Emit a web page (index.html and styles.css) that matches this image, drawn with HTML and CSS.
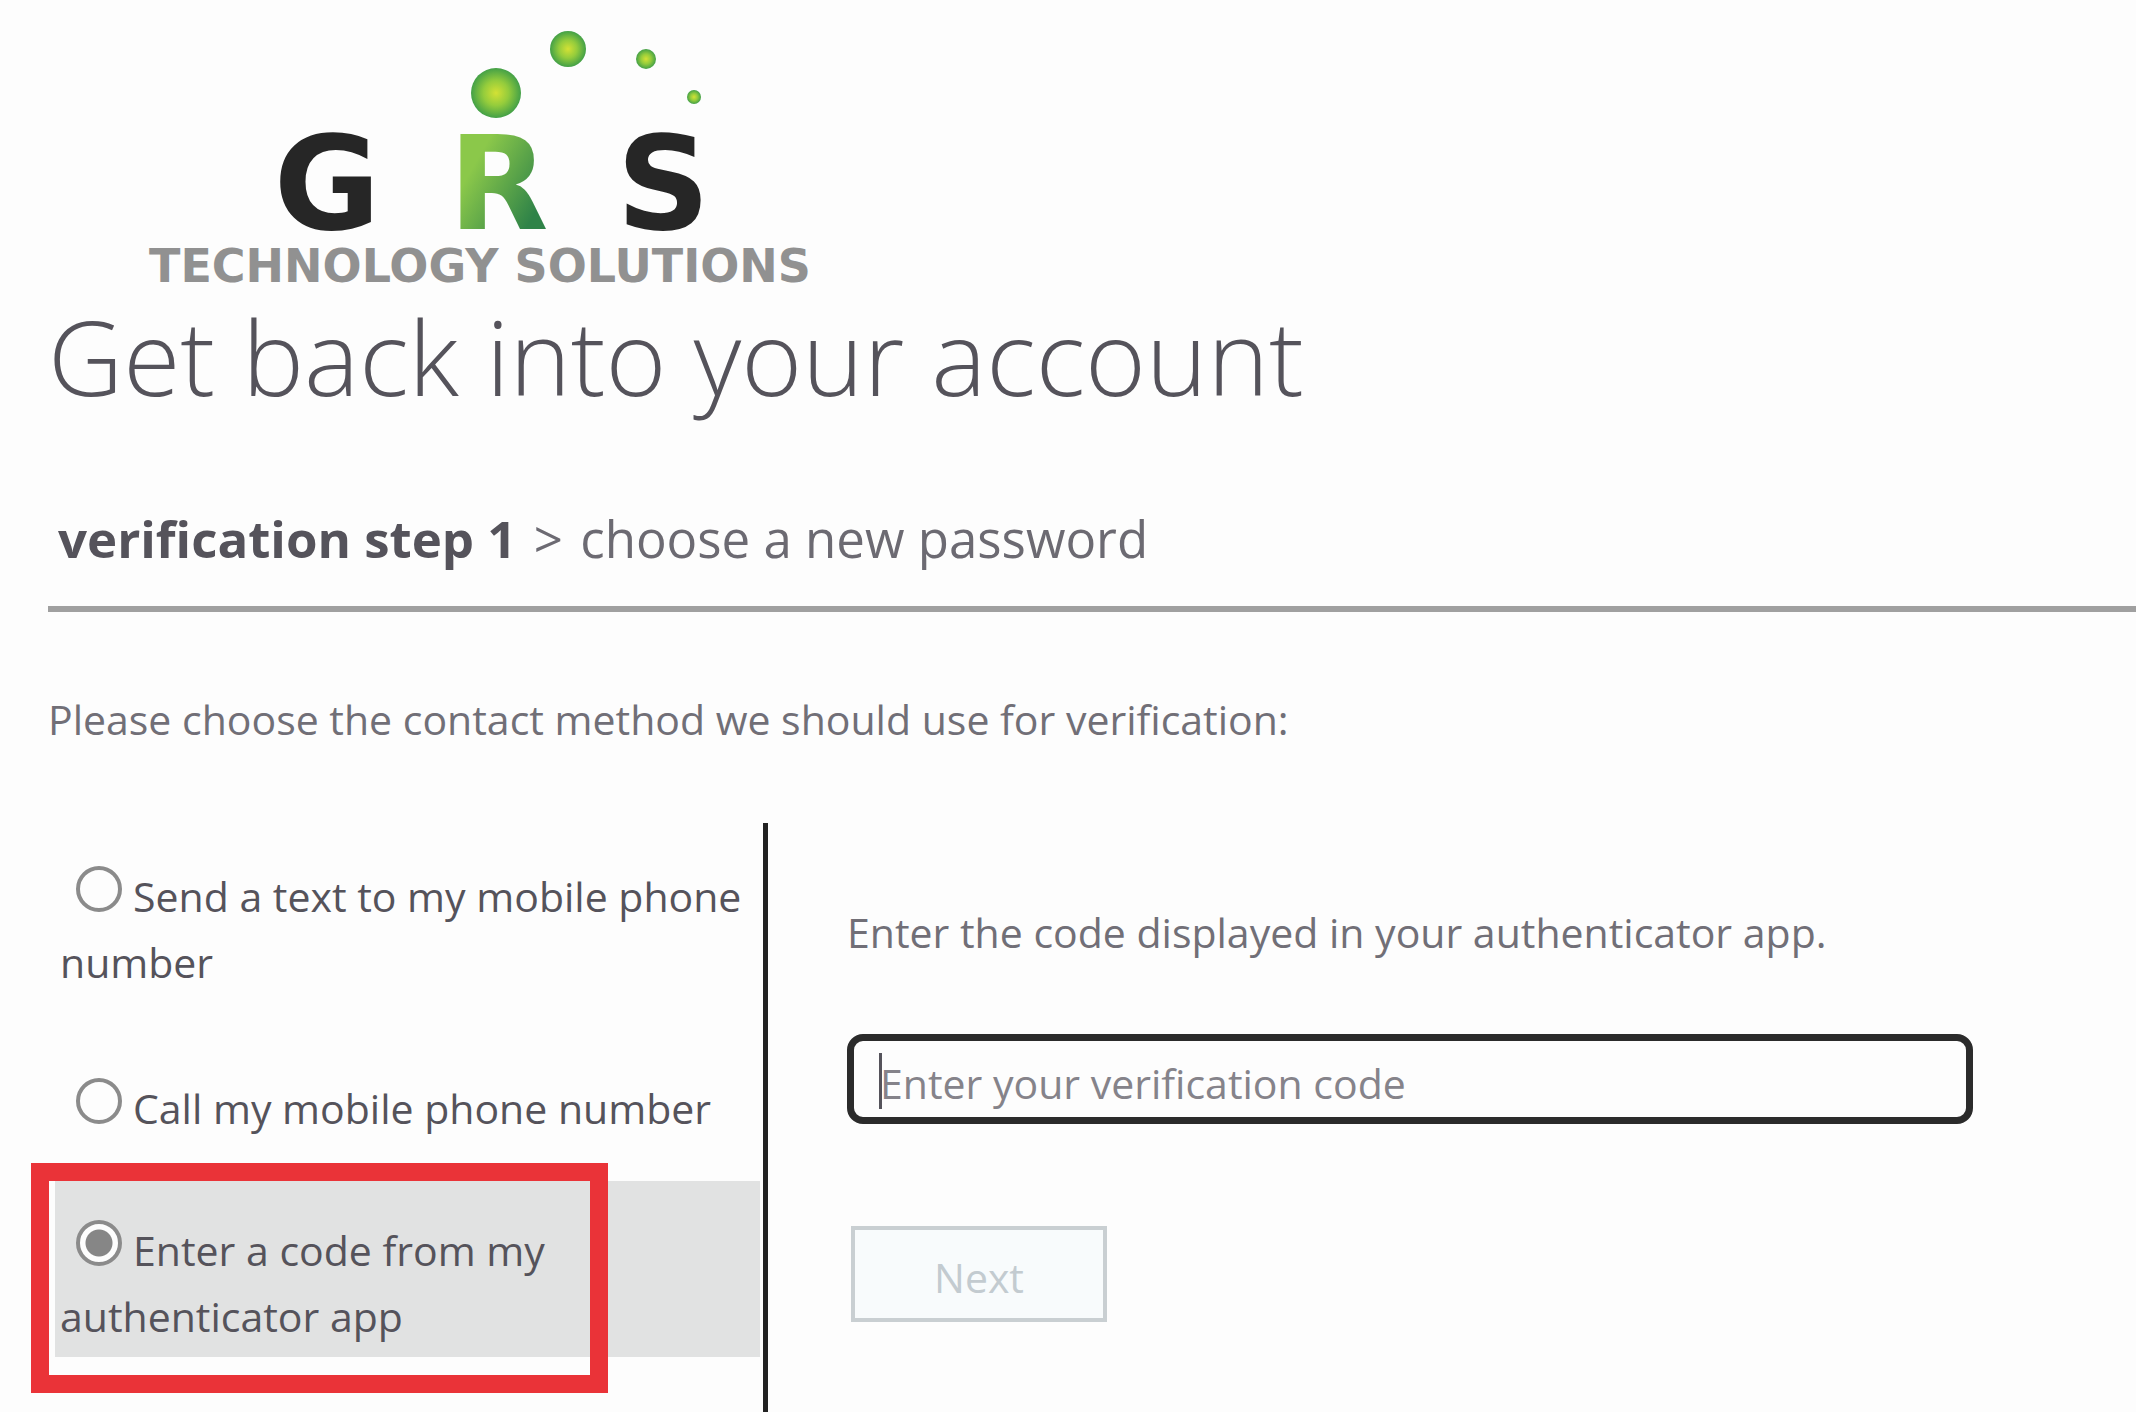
FILE: index.html
```
<!DOCTYPE html>
<html lang="en">
<head>
  <meta charset="UTF-8" />
  <meta name="viewport" content="width=device-width, initial-scale=1.0" />
  <title>Get back into your account</title>
  <link rel="stylesheet" href="styles.css">
</head>
<body>
  <header class="logo">
    <svg class="logo-dots" viewBox="0 0 240 92" aria-hidden="true">
      <defs>
        <radialGradient id="dot">
          <stop offset="0" stop-color="#d3e135" />
          <stop offset="0.5" stop-color="#94cc3c" />
          <stop offset="1" stop-color="#43a047" />
        </radialGradient>
      </defs>
      <circle cx="26" cy="67" r="25" fill="url(#dot)" />
      <circle cx="98" cy="23" r="18" fill="url(#dot)" />
      <circle cx="176" cy="33" r="10" fill="url(#dot)" />
      <circle cx="224" cy="71" r="7" fill="url(#dot)" />
    </svg>
    <div class="logo-name"><span>G</span><span class="logo-green">R</span><span>S</span></div>
    <div class="logo-tagline">TECHNOLOGY SOLUTIONS</div>
  </header>

  <main>
    <h1>Get back into your account</h1>
    <p class="steps"><b>verification step 1</b> <span class="arrow">&gt;</span> choose a new password</p>
    <p class="intro">Please choose the contact method we should use for verification:</p>

    <form class="verify">
      <div class="methods">
        <div class="method">
          <input type="radio" name="method" id="sms"><label for="sms">Send a text to my mobile phone number</label>
        </div>
        <div class="method">
          <input type="radio" name="method" id="call"><label for="call">Call my mobile phone number</label>
        </div>
        <div class="method selected">
          <input type="radio" name="method" id="app" checked><label for="app">Enter a code from my<br>authenticator app</label>
          <div class="highlight"></div>
        </div>
      </div>

      <div class="entry">
        <label for="code">Enter the code displayed in your authenticator app.</label>
        <div class="field">
          <input type="text" id="code" placeholder="Enter your verification code">
          <span class="caret"></span>
        </div>
        <button type="button" disabled>Next</button>
      </div>
    </form>
  </main>
</body>
</html>
```

FILE: styles.css
```
* {
  box-sizing: border-box;
}
body {
  margin: 0;
  min-height: 100vh;
  display: flex;
  flex-direction: column;
  background: #fdfdfd;
  color: #55535b;
  font-family: "Open Sans", "Noto Sans", sans-serif;
  font-size: 41px;
  line-height: 66px;
}
.logo {
  width: 800px;
  margin-left: 80px;
  padding-top: 26px;
  display: flex;
  flex-direction: column;
  align-items: center;
  font-family: "DejaVu Sans", sans-serif;
  font-weight: bold;
}
.logo-dots {
  width: 240px;
  height: 92px;
  margin-left: 220px;
}
.logo-name {
  display: flex;
  gap: 68px;
  margin-left: 24px;
  color: #262626;
  font-size: 130px;
  line-height: 132px;
}
.logo-green {
  color: transparent;
  background: linear-gradient(120deg, #8bc84a 30%, #2f8348 80%);
  background-clip: text;
  -webkit-background-clip: text;
}
.logo-tagline {
  color: #919191;
  font-size: 46px;
  line-height: 32px;
}
main {
  flex: 1;
  display: flex;
  flex-direction: column;
}
h1 {
  margin: 6px 0 0 48px;
  font-size: 104px;
  font-weight: 300;
  line-height: 136px;
}
.steps {
  margin: 81px 0 0 48px;
  padding: 0 0 35px 10px;
  border-bottom: 6px solid #a0a0a0;
  color: #6c6a72;
  font-size: 51px;
}
.steps b {
  color: #55535b;
}
.arrow {
  margin: 0 4px;
}
.intro {
  margin: 74px 0 0 48px;
  color: #716f77;
}
.verify {
  flex: 1;
  display: flex;
  margin-top: 71px;
}
.methods {
  width: 768px;
  padding-left: 55px;
  border-right: 5px solid #222;
}
.method {
  position: relative;
  margin-right: 3px;
  padding: 40px 0 40px 5px;
}
.method input {
  appearance: none;
  width: 46px;
  height: 46px;
  margin: 0 11px 0 16px;
  border: 4px solid #8b8b8b;
  border-radius: 50%;
  background: #fdfdfd;
  vertical-align: 0;
}
.method input:checked {
  background: radial-gradient(circle, #868686 13px, #fdfdfd 14px);
}
.selected {
  padding: 36px 0 8px 5px;
  background: #e1e2e2;
}
.highlight {
  position: absolute;
  top: -18px;
  left: -24px;
  width: 577px;
  height: 230px;
  border: 18px solid #ea3338;
  pointer-events: none;
}
.entry {
  flex: 1;
  display: flex;
  flex-direction: column;
  align-items: flex-start;
  padding: 76px 163px 0 79px;
  color: #716f77;
}
.field {
  position: relative;
  width: 100%;
  margin-top: 69px;
}
.field input {
  display: block;
  width: 100%;
  height: 90px;
  padding: 8px 26px 0;
  border: 7px solid #2b2b2b;
  border-radius: 16px;
  background: #fdfdfd;
  color: #55535b;
  font: inherit;
}
.field input::placeholder {
  color: #85838a;
  opacity: 1;
}
.caret {
  position: absolute;
  top: 19px;
  left: 32px;
  width: 3px;
  height: 56px;
  background: #55535b;
}
.entry button {
  width: 256px;
  height: 96px;
  margin: 102px 0 0 4px;
  padding-top: 6px;
  border: 4px solid #c9cfd2;
  background: #f8fbfc;
  color: #c3cbd0;
  font: inherit;
}
```
